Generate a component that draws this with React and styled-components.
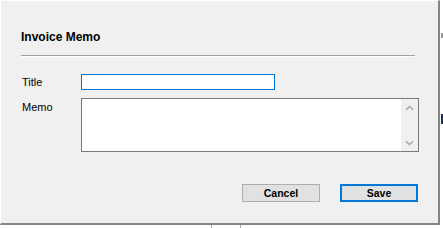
import React from "react";
import styled, { createGlobalStyle } from "styled-components";

const GlobalStyle = createGlobalStyle`
  html, body {
    margin: 0;
    padding: 0;
    background: #ffffff;
  }
  body {
    width: 443px;
    height: 228px;
    overflow: hidden;
    font-family: "Liberation Sans", Arial, sans-serif;
  }
  * {
    box-sizing: border-box;
  }
`;

const Page = styled.div`
  position: relative;
  width: 443px;
  height: 228px;
  display: flex;
  background: #ffffff;
`;

const BackCell = styled.div`
  width: ${(props) => props.width}px;
  height: 100%;
  border-right: ${(props) => (props.line ? "1px solid #a8a8a8" : "none")};
`;

const BackRest = styled.div`
  flex: 1;
  display: flex;
  flex-direction: column;
  align-items: flex-end;
  padding-top: 33px;
`;

const BackMark = styled.span`
  display: block;
  width: ${(props) => props.w}px;
  height: ${(props) => props.h}px;
  margin-bottom: ${(props) => props.mb || 0}px;
  background: ${(props) => props.color};
`;

const Dialog = styled.div`
  position: absolute;
  left: 0;
  top: 0;
  width: 440px;
  height: 225px;
  background: #f0f0f0;
  border-top: 1px solid #ffffff;
  border-left: 1px solid #ffffff;
  border-right: 2px solid #858585;
  border-bottom: 2px solid #858585;
  padding: 29px 0 0 20px;
  display: flex;
  flex-direction: column;
  color: #000000;
`;

const Heading = styled.h2`
  margin: 0;
  font-size: 12px;
  line-height: 14px;
  font-weight: bold;
`;

const Separator = styled.div`
  width: 394px;
  height: 2px;
  margin-top: 11px;
  border-top: 1px solid #a0a0a0;
  border-bottom: 1px solid #ffffff;
`;

const Row = styled.div`
  display: flex;
  align-items: ${(props) => (props.top ? "flex-start" : "center")};
  margin-top: ${(props) => props.gap}px;
`;

const Label = styled.label`
  width: 60px;
  padding-left: 1px;
  padding-top: ${(props) => (props.top ? 3 : 0)}px;
  font-size: 11px;
  line-height: 13px;
`;

const TextInput = styled.input`
  width: 194px;
  height: 16px;
  margin: 0;
  padding: 0 3px;
  border: 1px solid #0078d7;
  background: #ffffff;
  font-family: inherit;
  font-size: 11px;
  outline: none;
`;

const MemoBox = styled.div`
  width: 338px;
  height: 54px;
  display: flex;
  border: 1px solid #7a7a7a;
  background: #ffffff;
`;

const MemoArea = styled.textarea`
  flex: 1;
  margin: 0;
  padding: 2px 3px;
  border: none;
  resize: none;
  outline: none;
  font-family: inherit;
  font-size: 11px;
  background: transparent;
`;

const ScrollBar = styled.div`
  width: 17px;
  display: flex;
  flex-direction: column;
  justify-content: space-between;
  background: #f0f0f0;
`;

const ScrollButton = styled.div`
  height: 17px;
  display: flex;
  align-items: center;
  justify-content: center;
`;

const Buttons = styled.div`
  display: flex;
  justify-content: flex-end;
  gap: 20px;
  width: 397px;
  margin-top: 32px;
`;

const Button = styled.button`
  width: 78px;
  height: 18px;
  margin: 0;
  padding: 0;
  background: #e1e1e1;
  border: ${(props) => (props.primary ? "2px solid #0078d7" : "1px solid #adadad")};
  font-family: "Liberation Sans", Arial, sans-serif;
  font-size: 10.5px;
  font-weight: bold;
  color: #000000;
  line-height: 1;
`;

const Chevron = ({ down }) => (
  <svg width="9" height="6" viewBox="0 0 9 6">
    <path
      d={down ? "M1 1.2 L4.5 4.6 L8 1.2" : "M1 4.8 L4.5 1.4 L8 4.8"}
      fill="none"
      stroke="#a6a6a6"
      strokeWidth="1.4"
    />
  </svg>
);

export default function App() {
  return (
    <>
      <GlobalStyle />
      <Page>
        <BackCell width={212} line />
        <BackCell width={29} line />
        <BackRest>
          <BackMark w={2} h={5} color="#9a9a9a" mb={76} />
          <BackMark w={2} h={10} color="#1f2a5c" />
        </BackRest>
        <Dialog>
          <Heading>Invoice Memo</Heading>
          <Separator />
          <Row gap={17}>
            <Label>Title</Label>
            <TextInput type="text" />
          </Row>
          <Row gap={8} top>
            <Label top>Memo</Label>
            <MemoBox>
              <MemoArea />
              <ScrollBar>
                <ScrollButton>
                  <Chevron />
                </ScrollButton>
                <ScrollButton>
                  <Chevron down />
                </ScrollButton>
              </ScrollBar>
            </MemoBox>
          </Row>
          <Buttons>
            <Button>Cancel</Button>
            <Button primary>Save</Button>
          </Buttons>
        </Dialog>
      </Page>
    </>
  );
}
